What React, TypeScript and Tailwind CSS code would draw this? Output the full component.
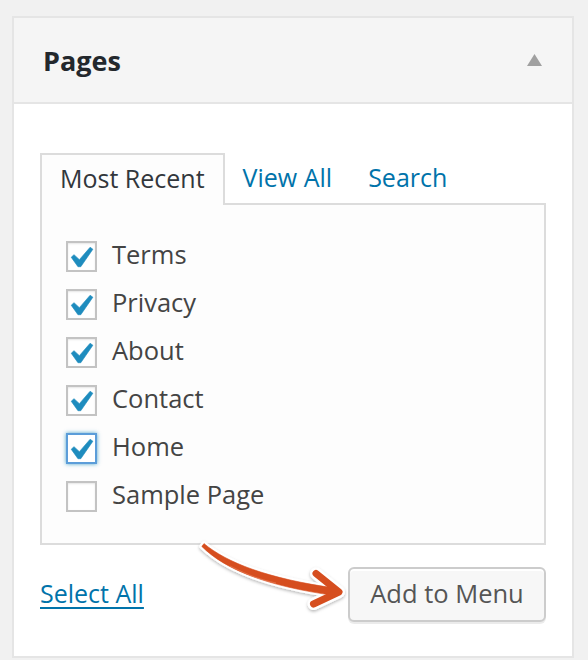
import React from "react";

const items = [
  { label: "Terms", checked: true },
  { label: "Privacy", checked: true },
  { label: "About", checked: true },
  { label: "Contact", checked: true },
  { label: "Home", checked: true, focus: true },
  { label: "Sample Page", checked: false },
];

function Check() {
  return (
    <svg width="24" height="22" viewBox="5.2 4.4 11.5 10.3" className="block">
      <path
        d="M14.83 4.89l1.34.94-5.81 8.38H9.02L5.78 9.67l1.34-1.25 2.57 2.4z"
        fill="#1e8cbe"
        stroke="#1e8cbe"
        strokeWidth="0.3"
        strokeLinejoin="round"
      />
    </svg>
  );
}

function Arrow() {
  const body =
    "M204,543.6 C226,562 266,578.5 336.5,588.3 L335.5,595.7 C264,585.8 224,568.5 201.8,546.4 Z";
  const head = "M316,573.5 L339,592 L313.5,604";
  return (
    <svg
      width="588"
      height="660"
      viewBox="0 0 588 660"
      className="absolute left-0 top-0 pointer-events-none"
    >
      <defs>
        <filter id="sh" x="-20%" y="-20%" width="140%" height="140%">
          <feDropShadow dx="0" dy="1.5" stdDeviation="1.6" floodColor="#000" floodOpacity="0.28" />
        </filter>
      </defs>
      <g filter="url(#sh)">
        <path d={body} fill="#fff" stroke="#fff" strokeWidth="5" strokeLinejoin="round" />
        <path d={head} fill="none" stroke="#fff" strokeWidth="12" strokeLinecap="round" strokeLinejoin="round" />
      </g>
      <path d={body} fill="#d64e1f" stroke="#d64e1f" strokeWidth="0.6" strokeLinejoin="round" />
      <path d={head} fill="none" stroke="#d64e1f" strokeWidth="7" strokeLinecap="round" strokeLinejoin="round" />
      <path d="M230,566 C250,576 262,580 276,583" fill="none" stroke="#e9835f" strokeWidth="1" opacity="0.6" />
    </svg>
  );
}

export default function App() {
  return (
    <div
      className="relative h-[660px] w-[588px] bg-[#f1f1f1] pt-[16px] pl-[12px]"
      style={{ fontFamily: '"Open Sans", "Noto Sans", sans-serif' }}
    >
      <div className="w-[562px] border-2 border-[#e5e5e5] bg-white">
        <div className="flex h-[86px] items-center justify-between border-b-2 border-[#e5e5e5] bg-[#f5f5f5] pl-[29px] pr-[30px]">
          <h3 className="text-[27px] font-bold leading-none text-[#23282d]">Pages</h3>
          <svg width="15" height="12" viewBox="0 0 15 12" className="block">
            <polygon points="7.5,0 15,12 0,12" fill="#a0a0a0" />
          </svg>
        </div>
        <div className="px-[26px] pt-[49px] pb-[34px]">
          <div className="flex h-[50px] items-stretch">
            <div className="relative z-10 -mb-[2px] flex h-[52px] items-center border-2 border-b-0 border-[#dcdcdc] bg-[#fdfdfd] px-[18px] pb-[3px] text-[25px] leading-none text-[#32373c]">
              Most Recent
            </div>
            <div className="flex items-center px-[18px] pb-[1px] text-[25px] leading-none text-[#0073aa]">View All</div>
            <div className="flex items-center px-[18px] pb-[1px] text-[25px] leading-none text-[#0073aa]">Search</div>
          </div>
          <div className="h-[342px] border-2 border-[#dcdcdc] bg-[#fdfdfd] pl-[24px] pt-[36px] pb-[31px]">
            <div className="flex flex-col gap-[17px]">
              {items.map((it) => (
                <div key={it.label} className="flex h-[31px] items-center gap-[15px]">
                  <div
                    className={
                      it.focus
                        ? "flex h-[31px] w-[31px] items-center justify-center border-2 border-[#5b9dd9] bg-white shadow-[0_0_4px_rgba(30,140,190,0.8)]"
                        : "flex h-[31px] w-[31px] items-center justify-center border-2 border-[#c3c3c3] bg-white shadow-[inset_0_1px_2px_rgba(0,0,0,0.1)]"
                    }
                  >
                    {it.checked && <Check />}
                  </div>
                  <span className="relative -top-[2px] text-[25.5px] leading-none text-[#444]">{it.label}</span>
                </div>
              ))}
            </div>
          </div>
          <div className="mt-[22px] flex items-center justify-between">
            <a className="relative -top-[1px] text-[25px] leading-none text-[#0073aa] underline decoration-[2px] underline-offset-[4px]">
              Select All
            </a>
            <button className="flex h-[55px] w-[198px] items-center justify-center rounded-[6px] border-2 border-[#cccccc] bg-[#f7f7f7] pb-[2px] text-[25.5px] leading-none text-[#555] shadow-[inset_0_2px_0_#fff,0_2px_0_rgba(0,0,0,0.08)]">
              Add to Menu
            </button>
          </div>
        </div>
      </div>
      <Arrow />
    </div>
  );
}
